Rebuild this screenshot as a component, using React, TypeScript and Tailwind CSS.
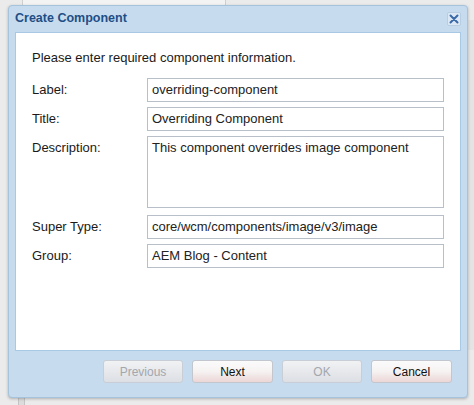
import React from 'react';

interface Field {
  label: string;
  value: string;
  multiline?: boolean;
}

const fields: Field[] = [
  { label: 'Label:', value: 'overriding-component' },
  { label: 'Title:', value: 'Overriding Component' },
  { label: 'Description:', value: 'This component overrides image component', multiline: true },
  { label: 'Super Type:', value: 'core/wcm/components/image/v3/image' },
  { label: 'Group:', value: 'AEM Blog - Content' },
];

const DialogButton: React.FC<{ label: string; disabled?: boolean }> = ({ label, disabled }) => (
  <button
    disabled={disabled}
    className={
      disabled
        ? 'w-[80px] h-[23px] rounded-[3px] border border-[#c9ced6] bg-gradient-to-b from-[#f1f2f4] to-[#dcdfe4] text-[12px] text-[#a3a7ad]'
        : 'w-[81px] h-[23px] rounded-[3px] border border-[#c3c6cc] bg-gradient-to-b from-[#fbfbfb] via-[#f6f2f2] to-[#ecd6d6] text-[12px] text-[#111]'
    }
  >
    {label}
  </button>
);

const App: React.FC = () => {
  return (
    <div
      className="relative w-[474px] h-[405px] overflow-hidden bg-[#ebebeb]"
      style={{ fontFamily: '"Liberation Sans", Arial, sans-serif' }}
    >
      {/* page behind the dialog */}
      <div className="absolute left-[22px] top-0 w-[204px] h-[6px] border-x border-b border-[#cfcfcf] bg-[#f3f3f3]" />
      <div className="absolute left-[18px] top-[397px] w-[7px] h-[8px] border-x border-[#c4c4c4] bg-[#dcdcdc]" />
      <div className="absolute right-0 top-[20px] w-[6px] h-[330px] bg-[#e4e4e4]" />

      {/* dialog */}
      <div className="absolute left-[8px] top-[5px] w-[460px] h-[393px] flex flex-col rounded-[4px] border border-[#a6c3dc] bg-[#c6dcee] shadow-[0_1px_3px_rgba(0,0,0,0.25)]">
        <div className="h-[25px] flex items-center justify-between pl-[6px] pr-[6px]">
          <span className="text-[12.5px] font-bold text-[#1f4e86]">Create Component</span>
          <div className="w-[14px] h-[14px] mt-[1px] flex items-center justify-center rounded-[2px] border border-[#b6cde2] bg-[#dce9f5]">
            <svg width="10" height="10" viewBox="0 0 10 10">
              <path d="M1.5 1.5 L8.5 8.5 M8.5 1.5 L1.5 8.5" stroke="#3a6aa8" strokeWidth="2" strokeLinecap="round" />
            </svg>
          </div>
        </div>

        <div className="ml-[6px] mt-[1px] w-[446px] h-[319px] border border-[#a9c8e3] bg-white px-[16px] pt-[17px] text-[13px] text-[#1a1a1a]">
          <p className="leading-[16px]">Please enter required component information.</p>
          <div className="mt-[12px] flex flex-col gap-[5px]">
            {fields.map((f) => (
              <div key={f.label} className={`flex ${f.label === 'Super Type:' ? 'mt-[2px]' : ''}`}>
                <div className="w-[115px] pt-[4px] leading-[16px]">{f.label}</div>
                <div
                  className={`w-[297px] border border-[#b8bfc8] px-[4px] pt-[3px] leading-[16px] text-[#222] ${
                    f.multiline ? 'h-[72px]' : 'h-[24px]'
                  }`}
                >
                  {f.value}
                </div>
              </div>
            ))}
          </div>
        </div>

        <div className="flex justify-end gap-[9px] pr-[15px] mt-[9px]">
          <DialogButton label="Previous" disabled />
          <DialogButton label="Next" />
          <DialogButton label="OK" disabled />
          <DialogButton label="Cancel" />
        </div>
      </div>
    </div>
  );
};

export default App;
